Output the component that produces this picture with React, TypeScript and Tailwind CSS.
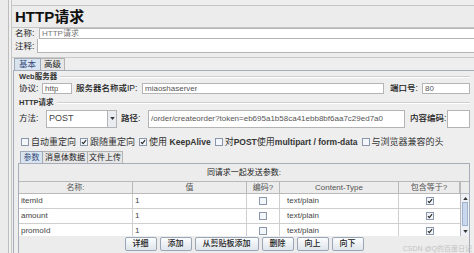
import React from 'react';

const sans = "font-['Liberation_Sans','Noto_Sans_CJK_SC',sans-serif]";

function Box({ on }: { on?: boolean }) {
  return (
    <span className="inline-flex h-[8px] w-[8px] shrink-0 items-center justify-center border border-[#8a97ab] bg-[#f3f6fa]">
      {on && (
        <svg viewBox="0 0 8 8" className="h-[6px] w-[6px]">
          <path d="M1.2 4.2l1.9 1.9L6.8 1.4" fill="none" stroke="#2a2a2a" strokeWidth={1.5} />
        </svg>
      )}
    </span>
  );
}

function Field({ w, text, className = '' }: { w?: string; text?: string; className?: string }) {
  return (
    <div
      className={`flex items-center border border-[#b4b4b4] bg-white px-[2px] text-[8px] text-[#555] ${w ?? 'flex-1'} ${className}`}
    >
      <span className="truncate">{text}</span>
    </div>
  );
}

function GroupTitle({ label }: { label: string }) {
  return (
    <div className="flex h-[8px] items-center gap-[3px] text-[7.5px] font-bold text-[#333]">
      <span className="leading-none">{label}</span>
      <div className="h-[2px] flex-1 border-t border-b border-t-[#cfcfcf] border-b-white" />
    </div>
  );
}

const rows = [
  { name: 'itemId', value: '1' },
  { name: 'amount', value: '1' },
  { name: 'promoId', value: '1' },
];

const buttons = ['详细', '添加', '从剪贴板添加', '删除', '向上', '向下'];

export default function App() {
  return (
    <div className={`relative flex h-[253px] w-[474px] overflow-hidden bg-[#eeeeee] ${sans} text-[#222]`}>
      <div className="w-[9px] border-r border-[#bdbdbd] bg-[#ebebeb]" />
      <div className="w-[3px] border-r border-[#c6c6c6] bg-[#f1f1f1]" />

      <div className="flex min-w-0 flex-1 flex-col pt-[5px]">
        {/* title */}
        <div className="flex h-[23px] items-center border-t border-b border-[#c6c6c6] bg-[#ececec] pl-[3px] text-[15px] font-bold leading-none text-[#111]">
          HTTP请求
        </div>

        {/* name / comment */}
        <div className="flex h-[11px] items-center">
          <span className="w-[27px] pl-[3px] text-[8.5px] leading-none">名称:</span>
          <Field text="HTTP请求" className="h-[11px] border-r-0 text-[#777]" />
        </div>
        <div className="flex h-[14px] items-center">
          <span className="w-[25px] pl-[3px] text-[8.5px] leading-none">注释:</span>
          <Field className="h-[14px] border-r-0 border-t-0" />
        </div>
        <div className="h-[4px]" />

        {/* tabs */}
        <div className="flex h-[13px] items-end border-t border-[#c8c8c8] pl-[2px]">
          <div className="flex h-[12px] w-[27px] items-center justify-center border border-b-0 border-[#9fa9b8] bg-[#d9e4f1] text-[8.5px] text-[#334a7a]">
            基本
          </div>
          <div className="flex h-[12px] w-[24px] items-center justify-center border border-b-0 border-l-0 border-[#b3b3b3] bg-[#e6e6e6] text-[8.5px]">
            高级
          </div>
        </div>

        {/* content panel */}
        <div className="ml-[1px] flex flex-1 flex-col border-t border-l border-[#a6adb8] pl-[5px] pr-[4px] pt-[2px]">
          <GroupTitle label="Web服务器" />
          <div className="mt-[1px] flex h-[13px] items-center text-[8.5px]">
            <span className="w-[23px] leading-none">协议:</span>
            <Field w="w-[30px]" text="http" className="h-[11px]" />
            <span className="ml-[4px] w-[66px] font-medium leading-none">服务器名称或IP:</span>
            <Field text="miaoshaserver" className="h-[11px]" />
            <span className="ml-[6px] w-[32px] font-medium leading-none">端口号:</span>
            <Field w="w-[48px]" text="80" className="h-[11px]" />
          </div>

          <div className="mt-[4px]">
            <GroupTitle label="HTTP请求" />
          </div>
          <div className="mt-[2px] flex h-[19px] items-center text-[8.5px]">
            <span className="w-[27px] leading-none">方法:</span>
            <div className="flex h-[18px] w-[71px] border border-[#b4b4b4] bg-white">
              <span className="flex flex-1 items-center pl-[2px] text-[9px] text-[#444]">POST</span>
              <span className="flex w-[9px] items-center justify-center border-l border-[#b4b4b4] bg-[#e9edf2]">
                <svg viewBox="0 0 6 4" className="h-[3px] w-[5px]">
                  <path d="M0 0h6L3 4z" fill="#333" />
                </svg>
              </span>
            </div>
            <span className="ml-[4px] w-[27px] font-medium leading-none">路径:</span>
            <Field text="/order/createorder?token=eb695a1b58ca41ebb8bf6aa7c29ed7a0" className="h-[18px]" />
            <span className="ml-[5px] w-[37px] font-medium leading-none">内容编码:</span>
            <Field w="w-[23px]" className="h-[18px]" />
          </div>

          {/* checkboxes */}
          <div className="mt-[7px] flex h-[14px] items-center gap-[2px] whitespace-nowrap pl-[2px] text-[9px] leading-none text-[#333]">
            <Box />
            <span className="mr-[2px]">自动重定向</span>
            <Box on />
            <span className="mr-[2px]">跟随重定向</span>
            <Box on />
            <span className="mr-[2px]">
              使用 <span className="text-[8.5px] font-bold">KeepAlive</span>
            </span>
            <Box />
            <span className="mr-[2px]">
              对<span className="text-[8.5px] font-bold">POST</span>使用
              <span className="text-[8.5px] font-bold">multipart / form-data</span>
            </span>
            <Box />
            <span>与浏览器兼容的头</span>
          </div>

          {/* sub tabs */}
          <div className="mt-[2px] flex h-[12px] items-end pl-[1px]">
            <div className="flex h-[12px] w-[23px] items-center justify-center border border-b-0 border-[#9fa9b8] bg-[#d9e4f1] text-[8px] text-[#334a7a]">
              参数
            </div>
            <div className="flex h-[12px] w-[45px] items-center justify-center border border-b-0 border-l-0 border-[#b3b3b3] bg-[#e6e6e6] text-[8px]">
              消息体数据
            </div>
            <div className="flex h-[12px] w-[35px] items-center justify-center border border-b-0 border-l-0 border-[#b3b3b3] bg-[#e6e6e6] text-[8px]">
              文件上传
            </div>
          </div>

          {/* params panel */}
          <div className="-ml-[1px] flex flex-1 flex-col border-t border-l border-r border-[#a6adb8] bg-[#ececec]">
            <div className="flex h-[17px] items-center justify-center text-[8px]">同请求一起发送参数:</div>
            <div className="flex border-t border-[#b9b9b9]">
              <div className="flex-1">
                <div className="grid h-[12px] grid-cols-[114px_114px_33px_119px_61px] bg-[#ececec] text-[8px] text-[#555]">
                  {['名称:', '值', '编码?', 'Content-Type', '包含等于?'].map((h) => (
                    <div key={h} className="flex items-center justify-center border-r border-b border-[#b9b9b9] leading-none">
                      {h}
                    </div>
                  ))}
                </div>
                <div className="h-[42px] overflow-hidden bg-white">
                  {rows.map((r) => (
                    <div key={r.name} className="grid h-[15px] grid-cols-[114px_114px_33px_119px_61px] text-[8px] text-[#444]">
                      <div className="flex items-center border-r border-b border-[#cfcfcf] pl-[2px]">{r.name}</div>
                      <div className="flex items-center border-r border-b border-[#cfcfcf] pl-[2px]">{r.value}</div>
                      <div className="flex items-center justify-center border-r border-b border-[#cfcfcf]">
                        <Box />
                      </div>
                      <div className="flex items-center border-r border-b border-[#cfcfcf] pl-[7px]">text/plain</div>
                      <div className="flex items-center justify-center border-b border-[#cfcfcf]">
                        <Box on />
                      </div>
                    </div>
                  ))}
                </div>
              </div>
              {/* scrollbar */}
              <div className="flex w-[9px] flex-col border-l border-[#b9b9b9] bg-[#eef1f5]">
                <div className="h-[12px] border-b border-[#b9b9b9] bg-[#ececec]" />
                <div className="flex h-[8px] items-center justify-center">
                  <svg viewBox="0 0 6 4" className="h-[3px] w-[5px]">
                    <path d="M0 4h6L3 0z" fill="#333" />
                  </svg>
                </div>
                <div className="mx-[1px] h-[24px] border border-[#9fb3cf] bg-[#c9d8ec]" />
                <div className="flex flex-1 items-end justify-center pb-[3px]">
                  <svg viewBox="0 0 6 4" className="h-[3px] w-[5px]">
                    <path d="M0 0h6L3 4z" fill="#333" />
                  </svg>
                </div>
              </div>
            </div>
            <div className="flex h-[15px] items-center justify-center gap-[3px]">
              {buttons.map((b) => (
                <div
                  key={b}
                  className="flex h-[14px] items-center justify-center rounded-[2px] border border-[#9aa5b6] bg-gradient-to-b from-[#fbfcfd] to-[#dfe5ec] px-[7px] text-[8px] font-medium"
                >
                  {b}
                </div>
              ))}
            </div>
            <div className="flex-1" />
          </div>
        </div>
      </div>

      <span className="absolute bottom-[1px] right-[2px] text-[7px] leading-none text-[#c3c3c3]">CSDN @Q的百度日记</span>
    </div>
  );
}
